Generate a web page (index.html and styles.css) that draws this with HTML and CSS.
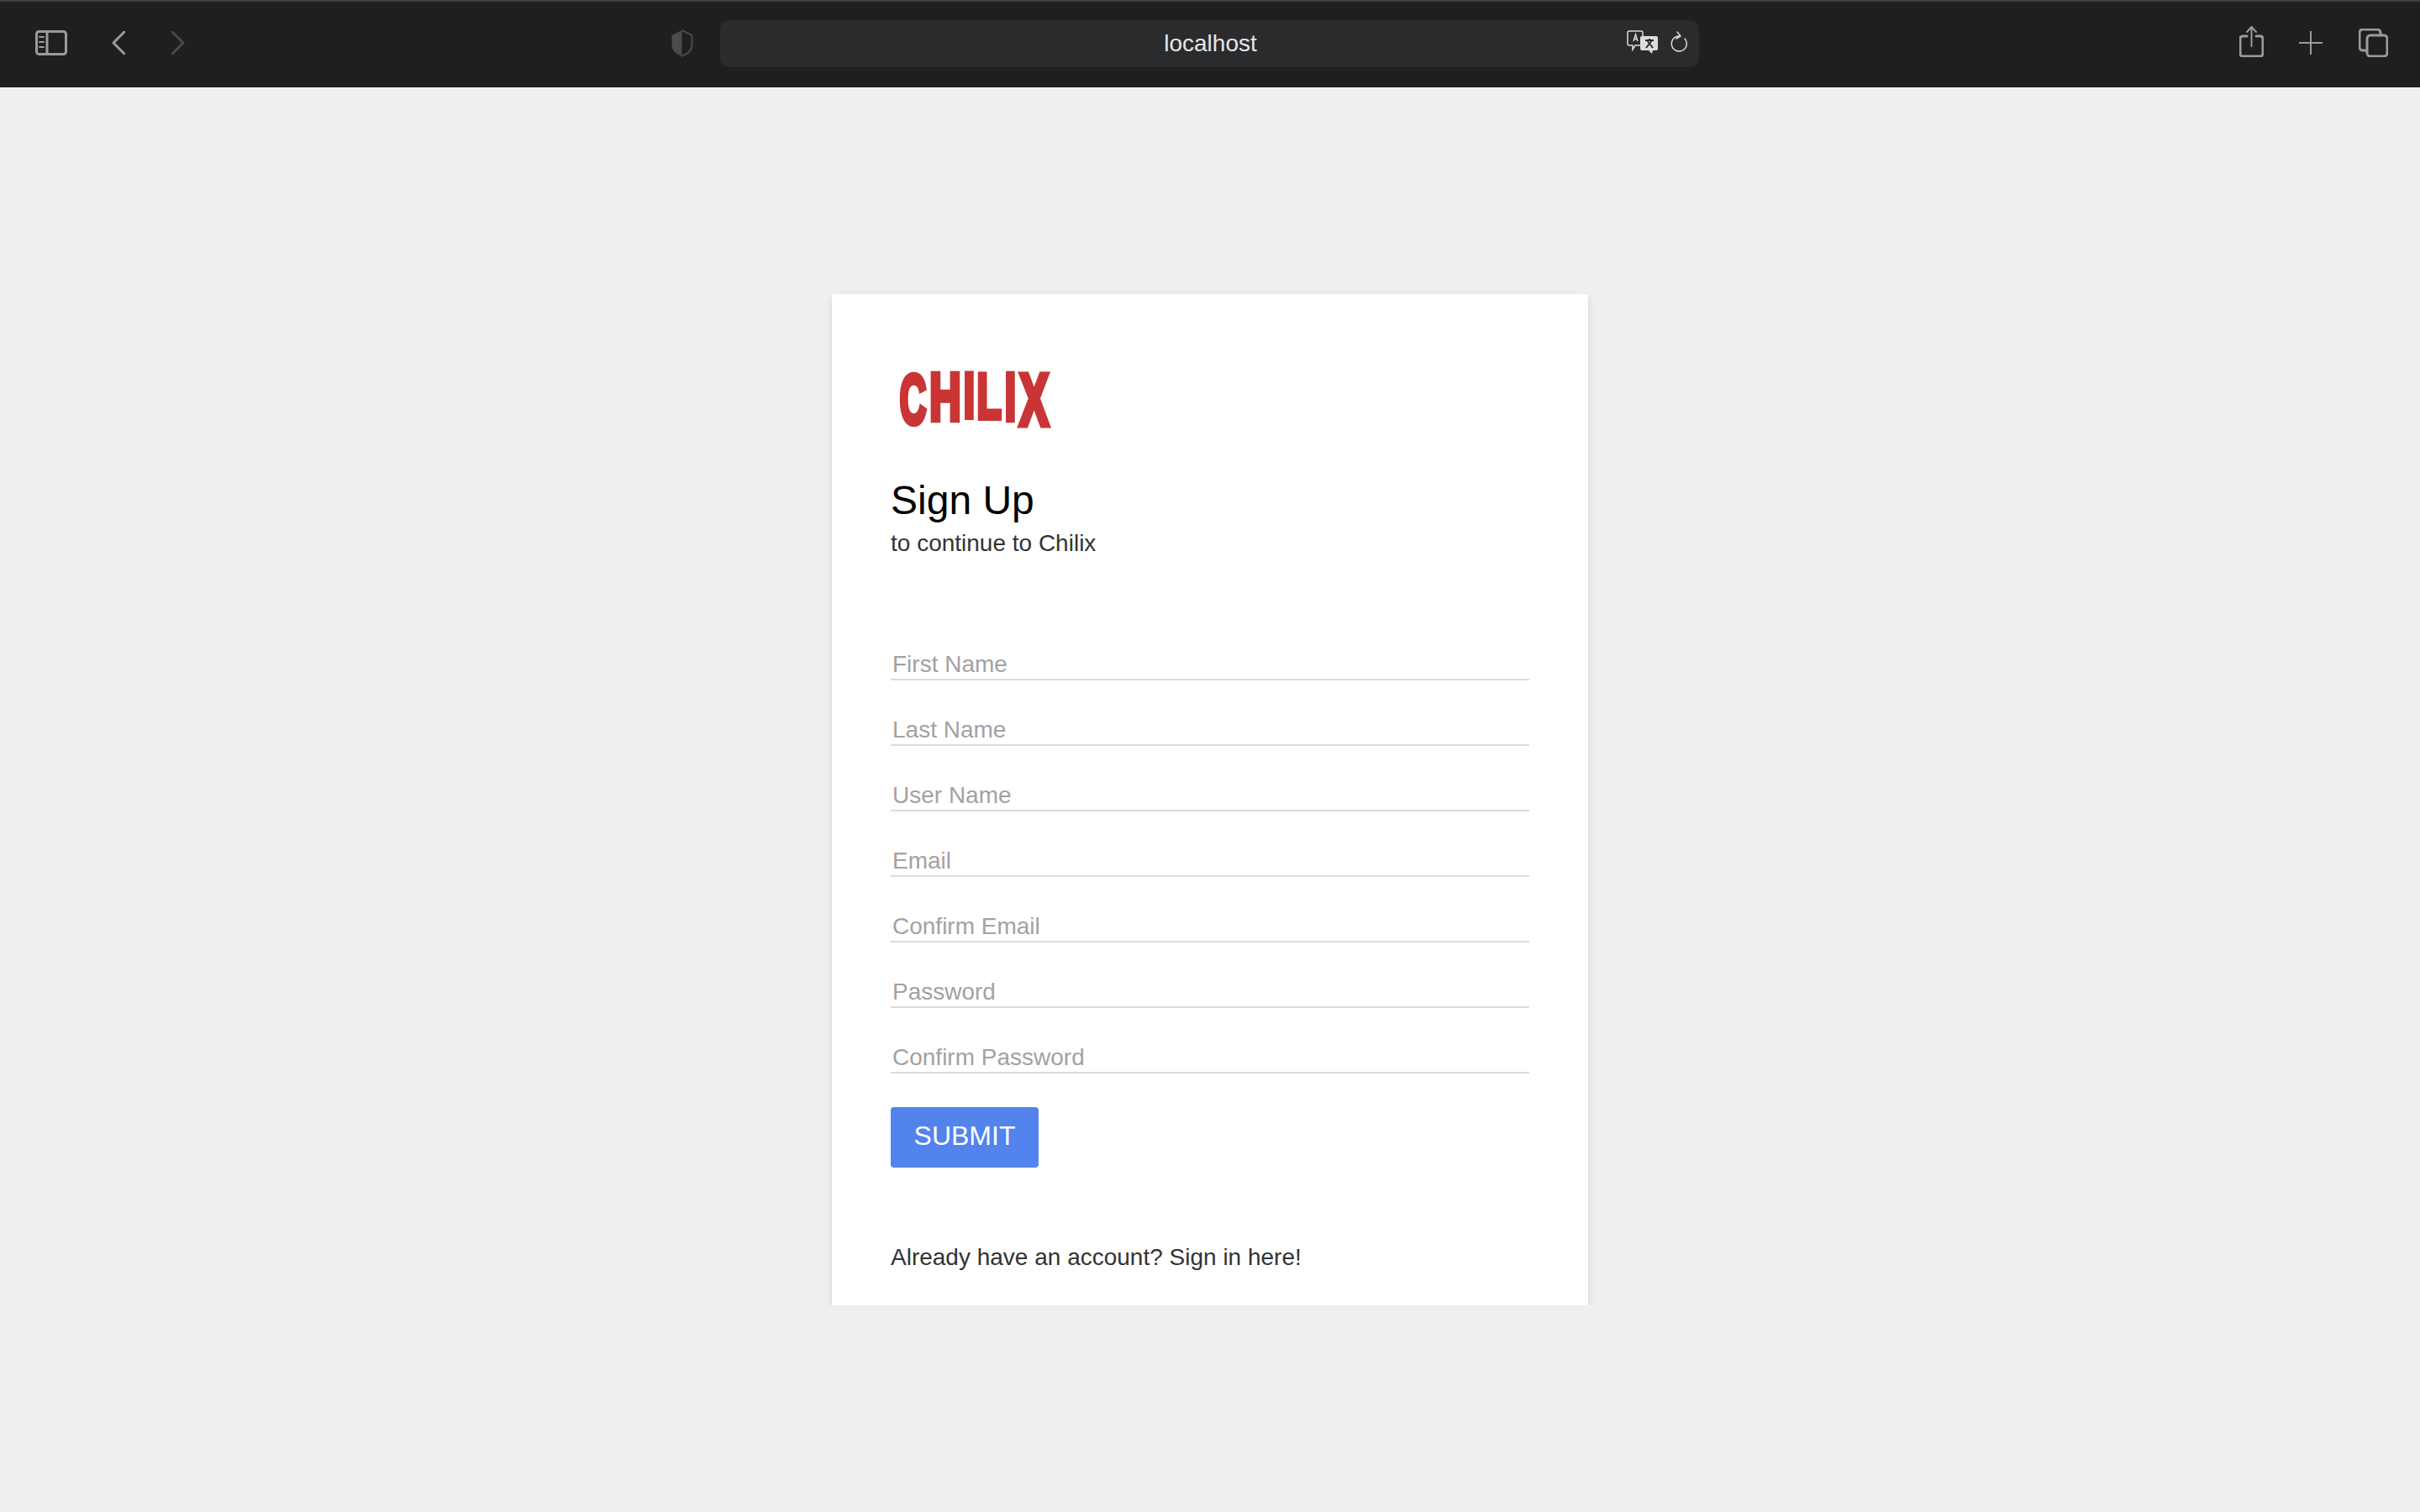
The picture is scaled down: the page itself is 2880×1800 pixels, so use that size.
FILE: index.html
```html
<!DOCTYPE html>
<html lang="en">
<head>
  <meta charset="UTF-8">
  <title>Chilix - Sign Up</title>
  <link rel="stylesheet" href="styles.css">
</head>
<body>
  <header class="barra">
    <svg class="ico ico-lateral" width="38" height="30" viewBox="0 0 38 30">
      <rect x="1.500" y="1.500" width="35" height="27" rx="3"/>
      <path d="M14 1.500v27"/>
      <path class="fino" d="M5 8h5M5 14h5M5 20h5"/>
    </svg>
    <svg class="ico ico-voltar" width="16" height="28" viewBox="0 0 16 28">
      <path d="M15 1L2 14l13 13"/>
    </svg>
    <svg class="ico ico-avancar" width="16" height="28" viewBox="0 0 16 28">
      <path d="M1 1l13 13L1 27"/>
    </svg>
    <svg class="ico-escudo" width="27" height="33" viewBox="0 0 27 33">
      <path class="metade" d="M13.500 1L1.500 7v12c0 6 5 10 12 13z"/>
      <path class="contorno" d="M13.500 1l12 6v12c0 6-5 10-12 13"/>
    </svg>
    <div class="endereco">
      <span class="url">localhost</span>
      <svg class="ico-traduzir" width="37" height="28" viewBox="0 0 37 28">
        <path class="balao" d="M3 1h14a2 2 0 0 1 2 2v13a2 2 0 0 1-2 2H10l-3 5v-5H3a2 2 0 0 1-2-2V3a2 2 0 0 1 2-2z"/>
        <path class="balao" d="M8 13l2.500-8 2.500 8M9 10.500h3"/>
        <path class="cheio" d="M18 7h17a2 2 0 0 1 2 2v13a2 2 0 0 1-2 2h-4l-1 4-4-4h-8a2 2 0 0 1-2-2V9a2 2 0 0 1 2-2z"/>
        <path class="letra" d="M22 12h10M27 10v2M23 21l7-9M31 21l-7-9"/>
      </svg>
      <svg class="ico ico-recarregar" width="21" height="26" viewBox="0 0 21 26">
        <path d="M10 6a9 9 0 1 0 7 3M8 1l4 5-5 3"/>
      </svg>
    </div>
    <svg class="ico ico-partilhar" width="29" height="37" viewBox="0 0 29 37">
      <path d="M9 12H4a3 3 0 0 0-3 3v18a3 3 0 0 0 3 3h21a3 3 0 0 0 3-3V15a3 3 0 0 0-3-3h-5"/>
      <path class="fino" d="M14.500 24V1M9 7l5.500-6L20 7"/>
    </svg>
    <svg class="ico ico-mais" width="28" height="28" viewBox="0 0 28 28">
      <path class="fino" d="M14 0v28M0 14h28"/>
    </svg>
    <svg class="ico ico-abas" width="35" height="34" viewBox="0 0 35 34">
      <path d="M9 26H5a4 4 0 0 1-4-4V5a4 4 0 0 1 4-4h17a4 4 0 0 1 4 4v3"/>
      <rect x="10" y="8" width="24" height="25" rx="4"/>
    </svg>
  </header>

  <main class="cartao">
    <svg class="logo" width="210" height="110" viewBox="0 0 210 110" role="img" aria-label="CHILIX">
      <text transform="translate(5.700 89.500) scale(.437 .83)">C</text>
      <text transform="translate(41.300 85.800) scale(.518 .794)">H</text>
      <text transform="translate(81.800 83) scale(.478 .755)">I</text>
      <text transform="translate(97.400 84) scale(.479 .768)">L</text>
      <text transform="translate(130.800 85.800) scale(.478 .794)">I</text>
      <text transform="translate(148.400 91.500) scale(.514 .872)">X</text>
    </svg>

    <h1>Sign Up</h1>
    <p class="subtitulo">to continue to Chilix</p>

    <form class="formulario">
      <input type="text" placeholder="First Name">
      <input type="text" placeholder="Last Name">
      <input type="text" placeholder="User Name">
      <input type="email" placeholder="Email">
      <input type="email" placeholder="Confirm Email">
      <input type="password" placeholder="Password">
      <input type="password" placeholder="Confirm Password">
      <button type="button" class="btn-enviar">SUBMIT</button>
    </form>

    <p class="rodape">Already have an account? Sign in here!</p>
  </main>
</body>
</html>
```

FILE: styles.css
```css
body {
  margin: 0;
  background-color: #efefed;
  font-family: "Liberation Sans", Arial, sans-serif;
  color: #333;
}

.barra {
  display: flex;
  align-items: center;
  box-sizing: border-box;
  height: 104px;
  padding-left: 42px;
  padding-bottom: 2px;
  background-color: #1e1f21;
  border-top: 2px solid #3e3f41;
}

.ico {
  flex: none;
  margin-bottom: 2px;
  fill: none;
  stroke: #9a9b9c;
  stroke-width: 3;
  stroke-linecap: round;
  stroke-linejoin: round;
}

.ico .fino {
  stroke-width: 2;
}

.ico-voltar {
  margin-left: 53px;
}

.ico-avancar {
  margin-left: 55px;
  stroke: #48494b;
}

.ico-escudo {
  flex: none;
  margin-left: 578px;
  margin-bottom: 1px;
}

.ico-escudo .metade {
  fill: #4a4b4d;
}

.ico-escudo .contorno {
  fill: none;
  stroke: #4a4b4d;
  stroke-width: 2;
}

.endereco {
  position: relative;
  flex: none;
  display: flex;
  align-items: center;
  justify-content: flex-end;
  box-sizing: border-box;
  width: 1165px;
  height: 56px;
  margin-left: 32px;
  padding-right: 13px;
  background-color: #2a2b2d;
  border-radius: 10px;
}

.url {
  position: absolute;
  left: 2px;
  right: 0;
  text-align: center;
  font-size: 28px;
  color: #e6e6e6;
}

.ico-traduzir {
  position: relative;
  margin-right: 15px;
  margin-bottom: 5px;
}

.ico-traduzir .balao {
  fill: none;
  stroke: #dcdcdc;
  stroke-width: 1.5;
}

.ico-traduzir .cheio {
  fill: #dcdcdc;
}

.ico-traduzir .letra {
  fill: none;
  stroke: #2a2b2d;
  stroke-width: 2;
}

.ico-recarregar {
  position: relative;
  margin-bottom: 5px;
  stroke: #dcdcdc;
  stroke-width: 1.5;
}

.ico-partilhar {
  margin-left: 643px;
  margin-bottom: 5px;
}

.ico-mais {
  margin-left: 42px;
  margin-bottom: 3px;
}

.ico-abas {
  margin-left: 43px;
}

.cartao {
  box-sizing: border-box;
  width: 900px;
  height: 1204px;
  margin: 246px auto 0;
  padding: 64px 70px 0;
  background-color: white;
  box-shadow: 0 3px 8px rgba(0, 0, 0, 0.12);
}

.logo {
  display: block;
  margin-left: 5px;
  overflow: visible;
}

.logo text {
  font-family: "Liberation Sans", Arial, sans-serif;
  font-weight: bold;
  font-size: 100px;
  fill: #c93535;
  stroke: #c93535;
  stroke-width: 8;
}

h1 {
  margin: 44px 0 7px;
  font-size: 48px;
  font-weight: normal;
  line-height: 56px;
  color: black;
}

.subtitulo {
  margin: 0 0 101px;
  font-size: 28px;
  line-height: 32px;
}

.formulario {
  display: flex;
  flex-direction: column;
  align-items: flex-start;
  gap: 32px;
}

.formulario input {
  box-sizing: border-box;
  width: 100%;
  height: 46px;
  padding: 10px 2px 0;
  border: none;
  border-bottom: 2px solid #dcdcdc;
  outline: none;
  font-family: inherit;
  font-size: 28px;
}

.formulario input::placeholder {
  color: #a2a2a2;
  opacity: 1;
}

.btn-enviar {
  width: 176px;
  height: 72px;
  margin-top: 8px;
  padding: 0 0 4px;
  background-color: #5383ec;
  color: white;
  border: none;
  border-radius: 4px;
  font-family: inherit;
  font-size: 32px;
}

.rodape {
  margin: 91px 0 0;
  font-size: 28px;
  line-height: 32px;
}
```
